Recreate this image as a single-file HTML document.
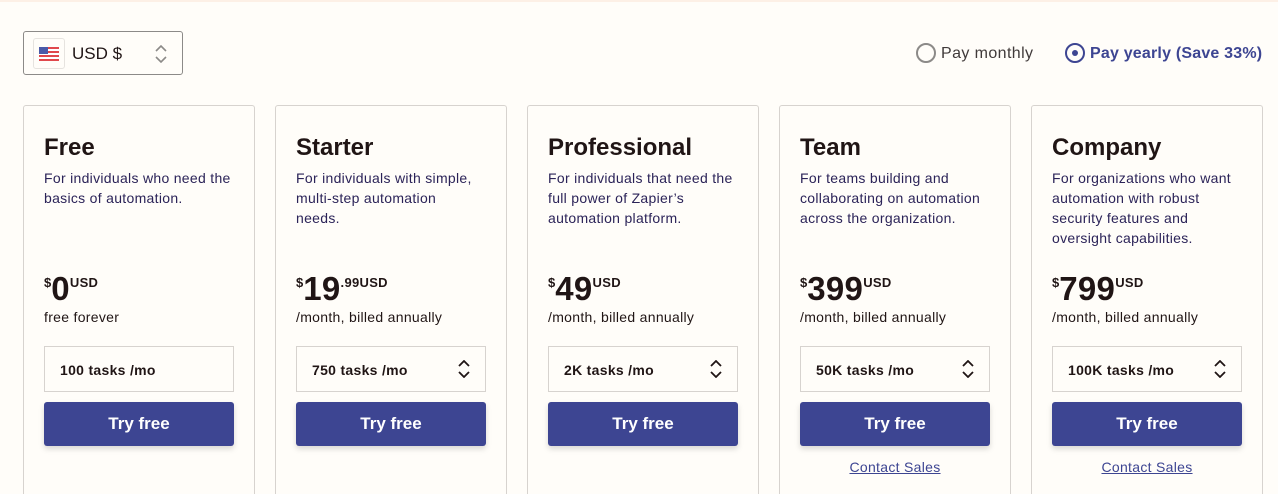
<!DOCTYPE html>
<html><head><meta charset="utf-8"><style>
*{box-sizing:border-box;margin:0;padding:0}
html,body{width:1278px;height:494px;overflow:hidden}
body{background:#fffdf9;font-family:"Liberation Sans",sans-serif;color:#201515;position:relative}
.top{position:absolute;left:0;top:0;width:100%;height:2px;background:#fdf0e6}
.cur{position:absolute;left:23px;top:31px;width:160px;height:44px;border:1px solid #8c8a88;border-radius:3px}
.flag{position:absolute;left:9px;top:6px;width:32px;height:31px;border:1px solid #e6e3df;border-radius:3px;background:#fffdf9}
.cur .t{position:absolute;left:48px;top:12px;font-size:17px}
.chev{position:absolute}
.radio{position:absolute;top:43px;width:20px;height:20px;border-radius:50%}
.lbl{position:absolute;top:45px;font-size:16px;letter-spacing:0.4px}
.card{position:absolute;top:105px;width:232px;height:389px;border:1px solid #d7d3cf;border-bottom:none;border-radius:3px 3px 0 0}
.card h2{position:absolute;left:20px;top:28px;font-size:24px;font-weight:bold}
.card .d{position:absolute;left:20px;top:62px;width:192px;font-size:14px;line-height:20px;color:#2b2358;letter-spacing:0.3px}
.price{position:absolute;left:20px;top:164px;font-weight:bold;white-space:nowrap}
.price .s{font-size:13px;vertical-align:top;position:relative;top:5px}
.price .n{font-size:33px;letter-spacing:0.3px}
.price .u{font-size:13px;vertical-align:top;position:relative;top:5px;letter-spacing:0.3px}
.card .m{position:absolute;left:20px;top:203px;font-size:14px;letter-spacing:0.3px}
.sel{position:absolute;left:20px;top:240px;width:190px;height:46px;border:1px solid #d7d3cf;background:#fffdf9}
.sel span{position:absolute;left:15px;top:15px;font-size:14px;font-weight:bold;letter-spacing:0.3px}
.sel svg{position:absolute;right:15px;top:13px}
.btn{position:absolute;left:20px;top:296px;width:190px;height:44px;background:#3d4592;border-radius:3px;color:#fff;font-weight:bold;font-size:17px;text-align:center;line-height:44px;box-shadow:0 3px 6px rgba(0,0,0,.15)}
.cs{position:absolute;left:20px;top:353px;width:190px;text-align:center;font-size:14px;color:#3d4592;text-decoration:underline;letter-spacing:0.3px}
</style></head><body>
<div class="top"></div>
<div class="cur"><div class="flag"><svg width="20" height="14" style="position:absolute;left:5px;top:8px" viewBox="0 0 20 14"><rect width="20" height="14" fill="#fff"/><g fill="#e0484c"><rect y="0" width="20" height="2"/><rect y="4" width="20" height="2"/><rect y="8" width="20" height="2"/><rect y="12" width="20" height="2"/></g><rect width="9" height="7" fill="#4a5aa8"/></svg></div><span class="t">USD $</span>
<svg class="chev" style="left:131px;top:13px" width="12" height="18" viewBox="0 0 12 18"><path d="M1 6 6 1 11 6M1 12 6 17 11 12" fill="none" stroke="#8c8a88" stroke-width="1.6"/></svg></div>
<div class="radio" style="left:916px;border:2px solid #8c8a88"></div><div class="lbl" style="left:941px;color:#403a3a">Pay monthly</div>
<div class="radio" style="left:1065px;border:2px solid #3d4592"><div style="position:absolute;left:5px;top:5px;width:6px;height:6px;border-radius:50%;background:#3d4592"></div></div><div class="lbl" style="left:1090px;color:#3d4592;font-weight:bold;letter-spacing:0.2px">Pay yearly (Save 33%)</div>

<div class="card" style="left:23px"><h2>Free</h2><div class="d">For individuals who need the basics of automation.</div>
<div class="price"><span class="s">$</span><span class="n">0</span><span class="u">USD</span></div><div class="m">free forever</div>
<div class="sel"><span>100 tasks /mo</span></div><div class="btn">Try free</div></div>

<div class="card" style="left:275px"><h2>Starter</h2><div class="d">For individuals with simple,<br>multi-step automation<br>needs.</div>
<div class="price"><span class="s">$</span><span class="n">19</span><span class="u">.99USD</span></div><div class="m">/month, billed annually</div>
<div class="sel"><span>750 tasks /mo</span><svg width="12" height="18" viewBox="0 0 12 18"><path d="M1 6 6 1 11 6M1 12 6 17 11 12" fill="none" stroke="#201515" stroke-width="1.8"/></svg></div><div class="btn">Try free</div></div>

<div class="card" style="left:527px"><h2>Professional</h2><div class="d">For individuals that need the full power of Zapier’s automation platform.</div>
<div class="price"><span class="s">$</span><span class="n">49</span><span class="u">USD</span></div><div class="m">/month, billed annually</div>
<div class="sel"><span>2K tasks /mo</span><svg width="12" height="18" viewBox="0 0 12 18"><path d="M1 6 6 1 11 6M1 12 6 17 11 12" fill="none" stroke="#201515" stroke-width="1.8"/></svg></div><div class="btn">Try free</div></div>

<div class="card" style="left:779px"><h2>Team</h2><div class="d">For teams building and collaborating on automation across the organization.</div>
<div class="price"><span class="s">$</span><span class="n">399</span><span class="u">USD</span></div><div class="m">/month, billed annually</div>
<div class="sel"><span>50K tasks /mo</span><svg width="12" height="18" viewBox="0 0 12 18"><path d="M1 6 6 1 11 6M1 12 6 17 11 12" fill="none" stroke="#201515" stroke-width="1.8"/></svg></div><div class="btn">Try free</div><div class="cs">Contact Sales</div></div>

<div class="card" style="left:1031px"><h2>Company</h2><div class="d">For organizations who want automation with robust security features and oversight capabilities.</div>
<div class="price"><span class="s">$</span><span class="n">799</span><span class="u">USD</span></div><div class="m">/month, billed annually</div>
<div class="sel"><span>100K tasks /mo</span><svg width="12" height="18" viewBox="0 0 12 18"><path d="M1 6 6 1 11 6M1 12 6 17 11 12" fill="none" stroke="#201515" stroke-width="1.8"/></svg></div><div class="btn">Try free</div><div class="cs">Contact Sales</div></div>
</body></html>
